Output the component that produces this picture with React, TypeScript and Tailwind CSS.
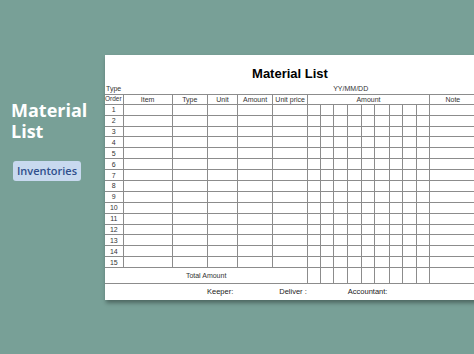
import React from "react";

const cols = [18, 49, 35, 30, 35, 35, 13, 13, 14, 14, 13, 14, 13, 14, 13, 47];
const rows = Array.from({ length: 15 }, (_, i) => i + 1);
const amountCells = Array.from({ length: 9 }, (_, i) => i);

const cell = "border border-[#8c8c8c] p-0";

export default function App() {
    return (
        <div className="w-[474px] h-[354px] overflow-hidden bg-[#78a097] flex flex-row" style={{ fontFamily: '"Liberation Sans", Arial, sans-serif' }}>
            <aside className="w-[105px] shrink-0 pl-[11px] pt-[100px] flex flex-col" style={{ fontFamily: '"Open Sans", sans-serif' }}>
                <div className="text-white font-bold text-[18px] leading-[21px]">Material</div>
                <div className="text-white font-bold text-[18px] leading-[21px]">List</div>
                <span className="mt-[19px] ml-[2px] w-[68px] h-[20px] rounded-[3px] bg-[#c8d9ef] text-[#2f4f8c] text-[11px] font-semibold flex items-center justify-center">
                    Inventories
                </span>
            </aside>
            <div className="mt-[55px] w-[372px] h-[245px] shrink-0 bg-white shadow-[1px_3px_4px_rgba(0,0,0,0.35)] text-[#333] flex flex-col">
                <div className="h-[29px] w-[370px] flex items-end justify-center pb-[4px]">
                    <span className="text-[13px] font-bold text-black leading-none">Material List</span>
                </div>
                <div className="h-[10px] flex flex-row items-center text-[7px] leading-none">
                    <span className="pl-[1px]">Type</span>
                    <span className="ml-[212px]">YY/MM/DD</span>
                </div>
                <table className="table-fixed border-collapse text-[7px] leading-none w-[372px]">
                    <colgroup>
                        {cols.map((w, i) => (
                            <col key={i} style={{ width: w }} />
                        ))}
                    </colgroup>
                    <tbody>
                        <tr className="h-[10px]">
                            <td className={`${cell} border-l-0 text-left text-[6.5px] whitespace-nowrap overflow-visible`}>Order</td>
                            <td className={`${cell} text-center`}>Item</td>
                            <td className={`${cell} text-center`}>Type</td>
                            <td className={`${cell} text-center`}>Unit</td>
                            <td className={`${cell} text-center`}>Amount</td>
                            <td className={`${cell} text-center`}>Unit price</td>
                            <td className={`${cell} text-center`} colSpan={9}>Amount</td>
                            <td className={`${cell} text-center`}>Note</td>
                        </tr>
                        {rows.map((n) => (
                            <tr key={n} className="h-[10.9px]">
                                <td className={`${cell} border-l-0 text-center`}>{n}</td>
                                <td className={cell}></td>
                                <td className={cell}></td>
                                <td className={cell}></td>
                                <td className={cell}></td>
                                <td className={cell}></td>
                                {amountCells.map((a) => (
                                    <td key={a} className={cell}></td>
                                ))}
                                <td className={cell}></td>
                            </tr>
                        ))}
                        <tr className="h-[16px]">
                            <td className={`${cell} border-l-0 text-center`} colSpan={6}>Total Amount</td>
                            {amountCells.map((a) => (
                                <td key={a} className={cell}></td>
                            ))}
                            <td className={cell}></td>
                        </tr>
                    </tbody>
                </table>
                <div className="h-[16px] flex flex-row items-center text-[7.5px] text-[#222] leading-none">
                    <span className="ml-[102px]">Keeper:</span>
                    <span className="ml-[46px]">Deliver :</span>
                    <span className="ml-[41px]">Accountant:</span>
                </div>
            </div>
        </div>
    )
}
